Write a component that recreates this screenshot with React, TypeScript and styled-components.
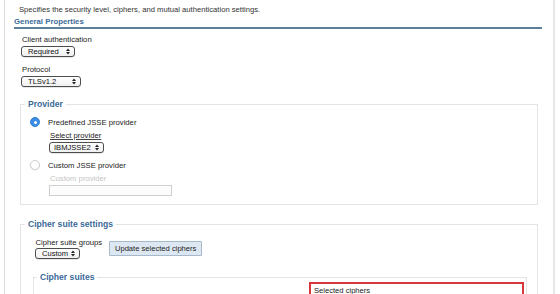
import React from "react";
import styled, { createGlobalStyle } from "styled-components";

const Global = createGlobalStyle`
  html, body { margin: 0; padding: 0; background: #fff; }
  body { font-family: "Liberation Sans", Arial, Helvetica, sans-serif; color: #222; }
  * { box-sizing: border-box; }
`;

const Page = styled.div`
  margin-left: 4px;
  width: 551px;
  height: 294px;
  overflow: hidden;
  border-left: 1px solid #dedede;
  border-right: 2px solid #e6e6e6;
  padding-top: 5px;
`;

const Description = styled.p`
  margin: 0 0 0 14px;
  font-size: 7.65px;
  line-height: 10px;
  color: #333;
`;

const SectionHeading = styled.h2`
  margin: 2px 11px 0 9px;
  font-size: 7.8px;
  line-height: 10px;
  font-weight: bold;
  color: #3d6b99;
  border-bottom: 2px solid #5e7f99;
`;

const Body = styled.div`
  padding: 6px 15px 0 15px;
  display: flex;
  flex-direction: column;
  align-items: stretch;
`;

const FieldGroup = styled.div<{ $top?: number; $left?: number }>`
  display: flex;
  flex-direction: column;
  align-items: flex-start;
  margin-top: ${(p) => p.$top ?? 0}px;
  margin-left: ${(p) => p.$left ?? 1}px;
`;

const Label = styled.span<{ $disabled?: boolean; $underline?: boolean }>`
  font-size: 7.7px;
  line-height: 9px;
  padding-left: 1px;
  margin-bottom: 2px;
  white-space: nowrap;
  color: ${(p) => (p.$disabled ? "#c4c4c4" : "#222")};
  text-decoration: ${(p) => (p.$underline ? "underline" : "none")};
  text-decoration-color: #444;
`;

const SelectBox = styled.span<{ $w: number; $pl?: number }>`
  display: inline-flex;
  align-items: center;
  justify-content: space-between;
  width: ${(p) => p.$w}px;
  height: 11px;
  padding: 0 4px 0 ${(p) => p.$pl ?? 6}px;
  border: 1px solid #4d4d4d;
  border-radius: 3px;
  background: linear-gradient(#ffffff, #f0f0f0);
  font-size: 7.6px;
  line-height: 9px;
  color: #111;
  box-shadow: 0 0.5px 0.5px rgba(0, 0, 0, 0.2);
`;

const Arrows = styled.svg`
  width: 4px;
  height: 7px;
  flex: none;
`;

const Select: React.FC<{ value: string; width: number; pl?: number }> = ({ value, width, pl }) => (
  <SelectBox $w={width} $pl={pl} role="combobox">
    <span>{value}</span>
    <Arrows viewBox="0 0 4 7">
      <polygon points="0,3 2,0.4 4,3" fill="#222" />
      <polygon points="0,4 2,6.6 4,4" fill="#222" />
    </Arrows>
  </SelectBox>
);

const Fieldset = styled.fieldset<{ $top: number; $ml?: number; $mr?: number }>`
  margin: ${(p) => p.$top}px ${(p) => p.$mr ?? 0}px 0 ${(p) => p.$ml ?? 0}px;
  padding: 0;
  border: 1px solid #e4e4e4;
  min-inline-size: 0;
`;

const Legend = styled.legend<{ $offset: number }>`
  margin-left: ${(p) => p.$offset}px;
  padding: 0 3px;
  font-size: 8.6px;
  line-height: 10px;
  font-weight: bold;
  color: #3b6a98;
`;

const ProviderBody = styled.div`
  padding: 8px 0 8px 9px;
  display: flex;
  flex-direction: column;
  align-items: flex-start;
`;

const OptionRow = styled.label<{ $top?: number }>`
  display: flex;
  align-items: center;
  gap: 8px;
  height: 10px;
  margin-top: ${(p) => p.$top ?? 0}px;
  font-size: 7.7px;
  color: #222;
`;

const Radio = styled.span<{ $checked?: boolean }>`
  width: 10px;
  height: 10px;
  border-radius: 50%;
  flex: none;
  display: flex;
  align-items: center;
  justify-content: center;
  background: ${(p) => (p.$checked ? "#3b8de3" : "#fff")};
  border: 1px solid ${(p) => (p.$checked ? "#3181d6" : "#cfcfcf")};
  box-shadow: ${(p) => (p.$checked ? "none" : "0 0.5px 1px rgba(0,0,0,0.12)")};
  &::after {
    content: "";
    display: ${(p) => (p.$checked ? "block" : "none")};
    width: 3px;
    height: 3px;
    border-radius: 50%;
    background: #fff;
  }
`;

const SubBlock = styled.div<{ $top: number }>`
  display: flex;
  flex-direction: column;
  align-items: flex-start;
  margin-left: 19px;
  margin-top: ${(p) => p.$top}px;
`;

const TextInput = styled.span`
  display: block;
  width: 123px;
  height: 11px;
  border: 1px solid #cfcfcf;
  background: #fcfcfc;
`;

const CipherBody = styled.div`
  padding: 9px 10px 0 12px;
  display: flex;
  flex-direction: column;
  align-items: stretch;
`;

const GroupRow = styled.div`
  display: flex;
  align-items: flex-start;
  margin-left: 2px;
`;

const GroupColumn = styled.div`
  display: flex;
  flex-direction: column;
  align-items: flex-start;
  & > span:first-child {
    margin-bottom: 1px;
    padding-left: 0.5px;
  }
`;

const Button = styled.button`
  margin: 2.5px 0 0 7px;
  height: 15px;
  width: 93px;
  padding: 0;
  font-family: inherit;
  font-size: 7.6px;
  color: #222;
  background: #dde7f1;
  border: 1px solid #a7b9cc;
  border-radius: 1px;
`;

const SuitesBody = styled.div`
  display: flex;
  justify-content: flex-end;
  padding-right: 2px;
`;

const SelectedBox = styled.div`
  width: 215px;
  height: 40px;
  border: 2px solid #d7363b;
  padding: 1.5px 3px;
  font-size: 7.6px;
  line-height: 10px;
  color: #222;
`;

export default function App() {
  return (
    <>
      <Global />
      <Page>
        <Description>Specifies the security level, ciphers, and mutual authentication settings.</Description>
        <SectionHeading>General Properties</SectionHeading>
        <Body>
          <FieldGroup>
            <Label>Client authentication</Label>
            <Select value="Required" width={54} />
          </FieldGroup>
          <FieldGroup $top={8}>
            <Label>Protocol</Label>
            <Select value="TLSv1.2" width={60} />
          </FieldGroup>

          <Fieldset $top={12}>
            <Legend $offset={4}>Provider</Legend>
            <ProviderBody>
              <OptionRow>
                <Radio $checked />
                Predefined JSSE provider
              </OptionRow>
              <SubBlock $top={4}>
                <Label $underline>Select provider</Label>
                <Select value="IBMJSSE2" width={55} pl={4} />
              </SubBlock>
              <OptionRow $top={7}>
                <Radio />
                Custom JSSE provider
              </OptionRow>
              <SubBlock $top={4}>
                <Label $disabled>Custom provider</Label>
                <TextInput />
              </SubBlock>
            </ProviderBody>
          </Fieldset>

          <Fieldset $top={14}>
            <Legend $offset={4}>Cipher suite settings</Legend>
            <CipherBody>
              <GroupRow>
                <GroupColumn>
                  <Label>Cipher suite groups</Label>
                  <Select value="Custom" width={45} />
                </GroupColumn>
                <Button type="button">Update selected ciphers</Button>
              </GroupRow>
              <Fieldset $top={13}>
                <Legend $offset={3}>Cipher suites</Legend>
                <SuitesBody>
                  <SelectedBox>Selected ciphers</SelectedBox>
                </SuitesBody>
              </Fieldset>
            </CipherBody>
          </Fieldset>
        </Body>
      </Page>
    </>
  );
}
